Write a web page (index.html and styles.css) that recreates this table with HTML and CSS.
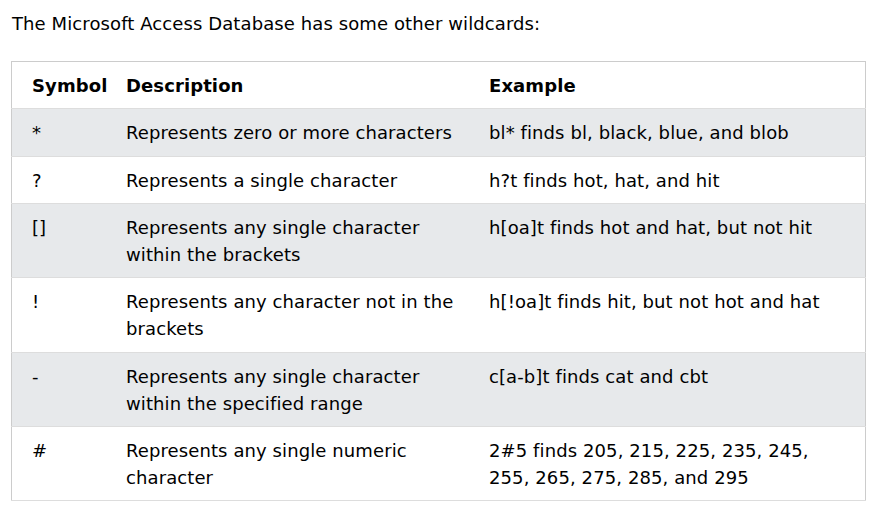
FILE: index.html
```html
<!DOCTYPE html>
<html>
<head>
<meta charset="utf-8">
<link rel="stylesheet" href="styles.css">
</head>
<body>
<div class="page">
  <p class="intro">The Microsoft Access Database has some other wildcards:</p>
  <table class="wc-table">
    <tr>
      <th class="c-sym">Symbol</th>
      <th class="c-desc">Description</th>
      <th class="c-ex">Example</th>
    </tr>
    <tr>
      <td>*</td>
      <td>Represents zero or more characters</td>
      <td>bl* finds bl, black, blue, and blob</td>
    </tr>
    <tr>
      <td>?</td>
      <td>Represents a single character</td>
      <td>h?t finds hot, hat, and hit</td>
    </tr>
    <tr>
      <td>[]</td>
      <td>Represents any single character within the brackets</td>
      <td>h[oa]t finds hot and hat, but not hit</td>
    </tr>
    <tr>
      <td>!</td>
      <td>Represents any character not in the brackets</td>
      <td>h[!oa]t finds hit, but not hot and hat</td>
    </tr>
    <tr>
      <td>-</td>
      <td>Represents any single character within the specified range</td>
      <td>c[a-b]t finds cat and cbt</td>
    </tr>
    <tr>
      <td>#</td>
      <td>Represents any single numeric character</td>
      <td>2#5 finds 205, 215, 225, 235, 245, 255, 265, 275, 285, and 295</td>
    </tr>
  </table>
</div>
</body>
</html>
```
FILE: styles.css
```css
html, body {
  margin: 0;
  padding: 0;
  background: #fff;
}
.page {
  padding: 10px 0 0 11px;
  font-family: "DejaVu Sans", Verdana, sans-serif;
  font-size: 18px;
  line-height: 27px;
  letter-spacing: 0.1px;
  color: #000;
}
.intro {
  margin: 0 0 24px 0;
  padding-left: 1px;
}
.wc-table {
  width: 855px;
  border-collapse: collapse;
  border: 1px solid #ccc;
  table-layout: fixed;
}
.wc-table th,
.wc-table td {
  text-align: left;
  vertical-align: top;
  padding: 10px 8px 9.35px 8px;
  border-bottom: 1px solid #ddd;
}
.wc-table th {
  font-weight: bold;
}
.wc-table tr > :first-child {
  padding-left: 20px;
}
.wc-table tr > :last-child {
  padding-right: 14px;
}
.wc-table tr:nth-child(even) {
  background: #e7e9eb;
}
.c-sym { width: 78px; }
.c-desc { width: 347px; }
.c-ex { width: auto; }
```
